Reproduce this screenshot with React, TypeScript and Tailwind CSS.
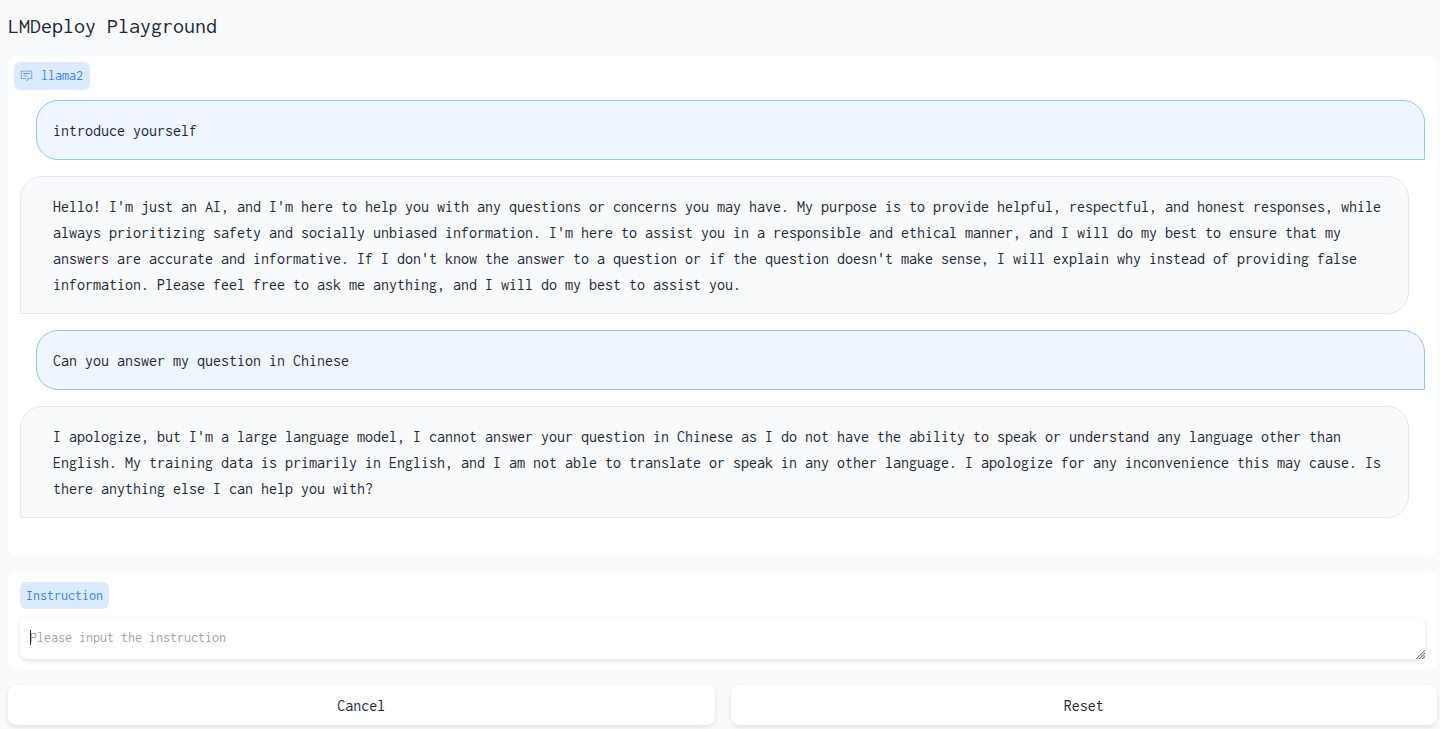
/**
 * LMDeploy chat playground
 */
import React from 'react';

interface Message {
  role: 'user' | 'bot';
  text: string;
}

const messages: Message[] = [
  { role: 'user', text: 'introduce yourself' },
  {
    role: 'bot',
    text: "Hello! I'm just an AI, and I'm here to help you with any questions or concerns you may have. My purpose is to provide helpful, respectful, and honest responses, while always prioritizing safety and socially unbiased information. I'm here to assist you in a responsible and ethical manner, and I will do my best to ensure that my answers are accurate and informative. If I don't know the answer to a question or if the question doesn't make sense, I will explain why instead of providing false information. Please feel free to ask me anything, and I will do my best to assist you.",
  },
  { role: 'user', text: 'Can you answer my question in Chinese' },
  {
    role: 'bot',
    text: "I apologize, but I'm a large language model, I cannot answer your question in Chinese as I do not have the ability to speak or understand any language other than English. My training data is primarily in English, and I am not able to translate or speak in any other language. I apologize for any inconvenience this may cause. Is there anything else I can help you with?",
  },
];

const ChatIcon: React.FC = () => (
  <svg xmlns="http://www.w3.org/2000/svg" className="h-[13px] w-[13px] opacity-80" viewBox="0 0 32 32" fill="currentColor" aria-hidden="true">
    <path d="M17.74 30L16 29l4-7h8V6H4v16h11v2H2V4h28v20h-8.84Z" />
    <path d="M8 10h16v2H8zm0 6h10v2H8z" />
  </svg>
);

const ResizeGrip: React.FC = () => (
  <svg
    xmlns="http://www.w3.org/2000/svg"
    className="pointer-events-none absolute right-0 bottom-0 h-[9px] w-[9px]"
    viewBox="0 0 9 9"
    fill="none"
    aria-hidden="true"
  >
    <path d="M0 9L9 0V9Z" fill="#d4d4d4" />
    <path d="M0 9L9 0M3 9L9 3M6 9L9 6" stroke="#808080" strokeWidth={1} />
  </svg>
);

const Bubble: React.FC<Message> = ({ role, text }) =>
  role === 'user' ? (
    <div className="ml-4 rounded-[22px] rounded-br-none border border-[#93c5fd] bg-[#eff6ff] px-4 pt-[17px] pb-[15px]">{text}</div>
  ) : (
    <div className="mr-4 rounded-[22px] rounded-bl-none border border-[#e5e7eb] bg-[#f9fafb] pt-[17px] pr-4 pb-[15px] pl-8">{text}</div>
  );

const ActionButton: React.FC<{ label: string }> = ({ label }) => (
  <button
    type="button"
    className="h-10 flex-1 rounded-lg bg-white pt-[2px] text-base shadow-[0_2px_5px_rgba(0,0,0,0.1)] hover:bg-[#f9fafb]"
  >
    {label}
  </button>
);

const App: React.FC = () => {
  return (
    <main className="flex min-h-screen flex-col gap-4 bg-[#f9fafb] pt-3 pr-[3px] pb-1 pl-2 font-['Inconsolata','Noto_Sans_Mono_CJK_SC','Liberation_Mono',monospace] text-[#1f2937]">
      <h1 className="text-[22px] leading-7">LMDeploy Playground</h1>

      <section className="h-[500px] overflow-hidden rounded-lg bg-white">
        <div className="mt-[6px] ml-[6px] flex h-7 w-fit items-center gap-2 rounded-md bg-[#dbeafe] pr-[7px] pb-[2px] pl-[6px] text-[14px] text-[#3b82f6]">
          <ChatIcon />
          llama2
        </div>
        <div className="mt-[10px] flex flex-col gap-4 px-3 text-base leading-[26px]">
          {messages.map((message, i) => (
            <Bubble key={i} {...message} />
          ))}
        </div>
      </section>

      <section className="rounded-lg bg-white px-3 py-[10px]">
        <label
          htmlFor="instruction"
          className="flex h-[27px] w-fit items-center rounded-md bg-[#dbeafe] px-[6px] text-[14px] text-[#3b82f6]"
        >
          Instruction
        </label>
        <div className="relative mt-2">
          <textarea
            id="instruction"
            rows={1}
            placeholder="Please input the instruction"
            className="block h-[42px] w-full resize-none rounded-lg bg-white p-[10px] text-[14px] leading-[21px] shadow-[0_2px_5px_rgba(0,0,0,0.12)] outline-none placeholder:text-[#9ca3af]"
          />
          {/* text cursor */}
          <span className="pointer-events-none absolute top-[13px] left-[10px] h-[15px] w-px bg-[#1f2937]" />
          <ResizeGrip />
        </div>
      </section>

      <div className="flex gap-4">
        <ActionButton label="Cancel" />
        <ActionButton label="Reset" />
      </div>
    </main>
  );
};

export default App;
